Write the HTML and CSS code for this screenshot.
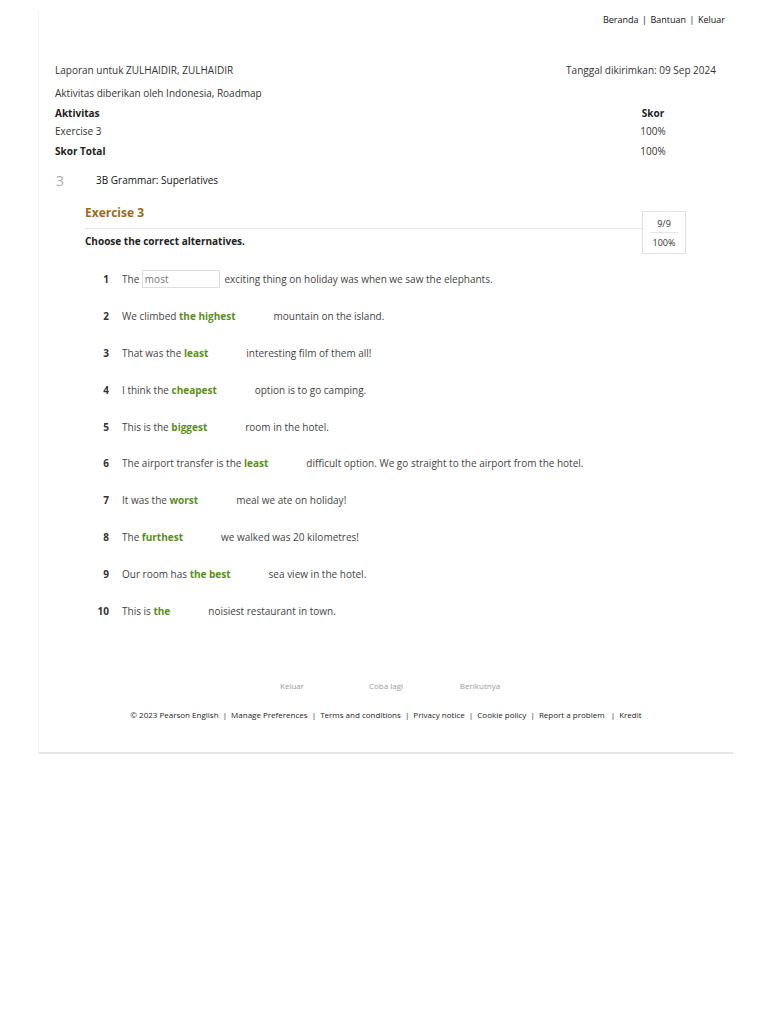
FILE: index.html
```html
<!DOCTYPE html>
<html lang="id">
<head>
<meta charset="utf-8">
<title>Laporan</title>
<link rel="stylesheet" href="styles.css">
</head>
<body>
<div class="page">
  <nav class="topnav"><a>Beranda</a><span class="sep">|</span><a>Bantuan</a><span class="sep">|</span><a>Keluar</a></nav>

  <section class="report">
    <div class="row">
      <span>Laporan untuk ZULHAIDIR, ZULHAIDIR</span>
      <span>Tanggal dikirimkan: 09 Sep 2024</span>
    </div>
    <div class="row given">Aktivitas diberikan oleh Indonesia, Roadmap</div>
    <div class="table">
      <div class="th">Aktivitas</div><div class="th c">Skor</div>
      <div class="td">Exercise 3</div><div class="td c">100%</div>
      <div class="th total">Skor Total</div><div class="td c total">100%</div>
    </div>
  </section>

  <div class="unit"><span class="unit-num">3</span><span class="unit-title">3B Grammar: Superlatives</span></div>

  <section class="exercise">
    <div class="ex-head">
      <div class="ex-left">
        <h2 class="ex-title">Exercise 3</h2>
        <p class="ex-instr">Choose the correct alternatives.</p>
      </div>
      <div class="scorebox"><div class="sb-top">9/9</div><div class="sb-bot">100%</div></div>
    </div>

    <ol class="items">
      <li><span class="n">1</span><span class="t">The <span class="inp">most</span> exciting thing on holiday was when we saw the elephants.</span></li>
      <li><span class="n">2</span><span class="t">We climbed <b class="ans">the highest</b>mountain on the island.</span></li>
      <li><span class="n">3</span><span class="t">That was the <b class="ans">least</b>interesting film of them all!</span></li>
      <li><span class="n">4</span><span class="t">I think the <b class="ans">cheapest</b>option is to go camping.</span></li>
      <li><span class="n">5</span><span class="t">This is the <b class="ans">biggest</b>room in the hotel.</span></li>
      <li><span class="n">6</span><span class="t">The airport transfer is the <b class="ans">least</b>difficult option. We go straight to the airport from the hotel.</span></li>
      <li><span class="n">7</span><span class="t">It was the <b class="ans">worst</b>meal we ate on holiday!</span></li>
      <li><span class="n">8</span><span class="t">The <b class="ans">furthest</b>we walked was 20 kilometres!</span></li>
      <li><span class="n">9</span><span class="t">Our room has <b class="ans">the best</b>sea view in the hotel.</span></li>
      <li><span class="n">10</span><span class="t">This is <b class="ans">the</b>noisiest restaurant in town.</span></li>
    </ol>
  </section>

  <div class="buttons"><a>Keluar</a><a>Coba lagi</a><a>Berikutnya</a></div>

  <footer class="footer">© 2023 Pearson English <span class="sep">|</span> Manage Preferences <span class="sep">|</span> Terms and conditions <span class="sep">|</span> Privacy notice <span class="sep">|</span> Cookie policy <span class="sep">|</span> Report a problem &nbsp;<span class="sep">|</span> Kredit</footer>
</div>
</body>
</html>
```

FILE: styles.css
```css
html, body { margin: 0; padding: 0; background: #fff; }
body {
  font-family: "Open Sans", "Noto Sans", sans-serif;
  color: #333;
  font-size: 10px;
}
.page {
  margin: 10px 0 0 38px;
  padding-top: 1px;
  width: 694px;
  border-left: 1px solid #f3f3f3;
  border-bottom: 2px solid #e6e6e6;
  padding-bottom: 30px;
}
.topnav {
  display: flex;
  justify-content: flex-end;
  height: 18px;
  line-height: 18px;
  font-size: 9px;
  color: #111;
  padding-right: 8px;
}
.topnav .sep { margin: 0 3.5px; }

.report { margin-top: 32px; padding: 0 17px 0 16px; }
.row { display: flex; justify-content: space-between; height: 18px; line-height: 18px; }
.given { margin-top: 5px; }
.table {
  display: grid;
  grid-template-columns: 1fr 60px;
  padding-right: 33px;
  margin-top: 2px;
}
.th, .td { height: 18px; line-height: 18px; }
.th { font-weight: 700; color: #222; }
.c { text-align: center; }
.total { margin-top: 2px; }

.unit { display: flex; align-items: center; height: 20px; margin-top: 10px; padding-left: 17px; }
.unit-num { width: 40px; font-size: 14px; color: #aaa; }
.unit-title { font-size: 10px; color: #111; }

.exercise { padding: 0 47px 0 46px; margin-top: 14px; }
.ex-head { display: flex; align-items: flex-start; }
.ex-left { flex: 1; }
.ex-title {
  margin: 0;
  font-size: 12px;
  font-weight: 700;
  color: #9b6b1b;
  height: 18px;
  line-height: 18px;
  padding: 0 0 6px;
  border-bottom: 1px solid #e3e3e3;
}
.ex-instr { margin: 3px 0 0; font-weight: 700; color: #222; height: 18px; line-height: 18px; }
.scorebox {
  margin-top: 7px;
  width: 42px;
  height: 41px;
  border: 1px solid #e0e0e0;
  font-size: 9px;
  text-align: center;
  color: #333;
}
.sb-top { margin: 3px 7px 0; height: 17px; line-height: 17px; border-bottom: 1px solid #e6e6e6; }
.sb-bot { height: 19px; line-height: 19px; }

.items { list-style: none; margin: 16px 0 0; padding: 0; }
.items li { display: flex; height: 18px; line-height: 18px; margin-bottom: 18.9px; }
.items li:last-child { margin-bottom: 0; }
.n { width: 24px; text-align: right; font-weight: 700; color: #333; margin-right: 13px; flex: none; }
.t { color: #444; white-space: nowrap; }
.ans { color: #5a8f20; font-weight: 700; margin-right: 38px; }
.inp {
  display: inline-block;
  box-sizing: border-box;
  width: 78px;
  height: 18px;
  line-height: 16px;
  border: 1px solid #ddd;
  padding: 0 2px;
  color: #777;
  vertical-align: top;
  margin-right: 2px;
}

.buttons {
  display: flex;
  justify-content: center;
  margin-top: 59px;
  font-size: 8px;
  color: #999;
  height: 14px;
  line-height: 14px;
}
.buttons a { width: 94px; text-align: center; }
.footer {
  text-align: center;
  font-size: 8px;
  color: #222;
  margin-top: 15px;
  height: 14px;
  line-height: 14px;
}
.footer .sep { margin: 0 2px; }
```
